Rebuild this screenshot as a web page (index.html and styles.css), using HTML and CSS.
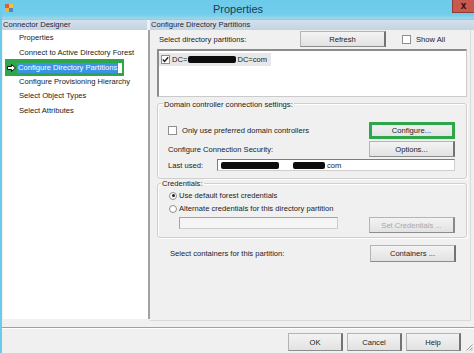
FILE: index.html
```html
<!DOCTYPE html>
<html>
  <head>
    <title>Properties</title>
    <link rel="stylesheet" href="styles.css">
  </head>
  <body>
    <div class="window">
      <div class="titlebar">
        <svg class="appicon" width="8" height="8" viewBox="0 0 8 8">
          <rect x="0" y="0" width="4" height="4" fill="#e25a3c"/>
          <rect x="4" y="0" width="4" height="4" fill="#f2c23e"/>
          <rect x="0" y="4" width="4" height="4" fill="#f0b43a"/>
          <rect x="4" y="4" width="4" height="4" fill="#4f86c6"/>
        </svg>
        <div class="title">Properties</div>
        <div class="close">x</div>
      </div>

      <div class="main">
        <div class="nav">
          <div class="pane-head">Connector Designer</div>
          <ul class="steps">
            <li>Properties</li>
            <li>Connect to Active Directory Forest</li>
            <li class="current">
              <svg class="arrow" width="9" height="8" viewBox="0 0 9 8">
                <path d="M0.5 2.5 H4.5 V0.5 L8.5 4 L4.5 7.5 V5.5 H0.5 Z" fill="#fff" stroke="#111" stroke-width="1"/>
              </svg>
              <span class="sel">Configure Directory Partitions</span>
              <span class="caret"></span>
            </li>
            <li>Configure Provisioning Hierarchy</li>
            <li>Select Object Types</li>
            <li>Select Attributes</li>
          </ul>
        </div>

        <div class="content">
          <div class="pane-head">Configure Directory Partitions</div>
          <div class="panel">
            <div class="partitions-bar">
              <span class="bar-label">Select directory partitions:</span>
              <button class="btn refresh">Refresh</button>
              <span class="check"></span>
              <span class="check-label">Show All</span>
            </div>

            <div class="listbox">
              <div class="partition">
                <span class="check checked">
                  <svg width="7" height="7" viewBox="0 0 7 7"><path d="M0.8 3.6 L2.6 5.4 L6.2 1.2" fill="none" stroke="#222" stroke-width="1.4"/></svg>
                </span>
                <span class="partition-name">DC=<span class="redact r1"></span>DC=com</span>
              </div>
            </div>

            <div class="group domain">
              <div class="group-title">Domain controller connection settings:</div>
              <div class="setting first">
                <span class="opt"><span class="check"></span><span class="check-label">Only use preferred domain controllers</span></span>
                <button class="btn marked">Configure...</button>
              </div>
              <div class="setting">
                <span>Configure Connection Security:</span>
                <button class="btn">Options...</button>
              </div>
              <div class="setting last-used">
                <span class="lu-label">Last used:</span>
                <span class="field lu-field"><span class="redact r2"></span><span class="redact r3"></span>com</span>
              </div>
            </div>

            <div class="group creds">
              <div class="group-title">Credentials:</div>
              <div class="radio-row"><span class="radio on"></span><span class="radio-label">Use default forest credentials</span></div>
              <div class="radio-row"><span class="radio"></span><span class="radio-label">Alternate credentials for this directory partition</span></div>
              <div class="setting cred-row">
                <span class="field off cred-field"></span>
                <button class="btn" disabled>Set Credentials ...</button>
              </div>
            </div>

            <div class="setting containers">
              <span>Select containers for this partition:</span>
              <button class="btn">Containers ...</button>
            </div>
          </div>
        </div>
      </div>

      <div class="footer">
        <div class="rule"></div>
        <div class="actions">
          <button class="btn wide">OK</button>
          <button class="btn wide">Cancel</button>
          <button class="btn wide">Help</button>
          <svg class="grip" width="8" height="8" viewBox="0 0 8 8">
            <path d="M7.5 1.5 L1.5 7.5 M7.5 4.5 L4.5 7.5 M7.5 6.5 L6.5 7.5" stroke="#9a9a9a" stroke-width="1"/>
          </svg>
        </div>
      </div>
    </div>
  </body>
</html>
```

FILE: styles.css
```css
body {
  margin: 0;
  width: 474px;
  height: 353px;
  overflow: hidden;
  background: #f0f0f0;
  font-family: "Liberation Sans", Arial, sans-serif;
  font-size: 7.6px;
  color: #222;
}
ul {
  list-style: none;
  margin: 0;
  padding: 0;
}
.window {
  height: 353px;
  display: flex;
  flex-direction: column;
  border-left: 2px solid #6ccbe8;
  box-sizing: border-box;
}

/* title bar */
.titlebar {
  height: 20px;
  flex: none;
  display: grid;
  grid-template-columns: 1fr auto 1fr;
  align-items: start;
  background: linear-gradient(#6dcbea, #70cdeb 75%, #9fd6ea);
  border-bottom: 1px solid #a9c4d8;
  box-sizing: border-box;
}
.appicon {
  margin: 4px 0 0 3px;
}
.title {
  font-size: 11px;
  line-height: 19px;
  color: #1d3a55;
}
.close {
  justify-self: end;
  width: 22px;
  height: 13px;
  background: #c8594f;
  border: 1px solid #8e3b35;
  border-top: 0;
  border-right: 0;
  box-sizing: border-box;
  color: #2a0d0a;
  font-weight: bold;
  font-size: 10px;
  line-height: 11px;
  text-align: center;
}

/* panes */
.main {
  flex: none;
  height: 301px;
  display: grid;
  grid-template-columns: 148px 1fr;
}
.nav, .content {
  display: flex;
  flex-direction: column;
}
.pane-head {
  height: 10px;
  line-height: 10px;
  padding-left: 1px;
  background: linear-gradient(#d3dfeb, #c4d3e3);
  color: #1a2838;
  white-space: nowrap;
}
.nav .pane-head {
  margin-right: 3px;
}
.steps {
  height: 289px;
  margin-left: 1px;
  padding-top: 1px;
  background: #fff;
  border-right: 2px solid #a2a2a2;
  box-sizing: border-box;
}
.steps li {
  height: 14.6px;
  line-height: 14.6px;
  padding-left: 16px;
  white-space: nowrap;
}
.steps li.current {
  margin: -1.2px 0 -1.2px 2px;
  width: 119px;
  height: 17px;
  padding-left: 2px;
  box-sizing: border-box;
  display: flex;
  align-items: center;
  background: #2ea64a;
}
.sel {
  margin-left: 1px;
  width: 100px;
  height: 10px;
  line-height: 10px;
  padding-left: 1px;
  box-sizing: border-box;
  background: #3b93e6;
  color: #fff;
  white-space: nowrap;
}
.caret {
  margin-left: 1px;
  width: 4px;
  height: 10px;
  background: #fff;
}

.panel {
  height: 291px;
  margin-right: 4px;
  padding: 1px 3px 0 7px;
  border-right: 1px solid #dadada;
  border-bottom: 1px solid #dadada;
  box-sizing: border-box;
}
.partitions-bar {
  display: flex;
  align-items: center;
  height: 16px;
}
.bar-label {
  width: 143px;
  padding-left: 2px;
  box-sizing: border-box;
}
.refresh {
  width: 78px;
  height: 16px;
  margin-right: 16px;
}

/* controls */
.btn {
  box-sizing: border-box;
  width: 86px;
  height: 16px;
  padding: 0;
  background: linear-gradient(#f3f3f3, #e2e2e2);
  border: 1px solid #b4b4b4;
  border-right: 2px solid #737373;
  border-bottom-color: #8c8c8c;
  font: inherit;
  color: #222;
  text-align: center;
}
.btn:disabled {
  color: #a9a9a9;
  border-right-color: #8a8a8a;
}
.btn.marked {
  height: 17px;
  outline: 3px solid #2ea64a;
  outline-offset: -3px;
}
.check {
  display: inline-flex;
  align-items: center;
  justify-content: center;
  width: 9px;
  height: 9px;
  background: #fff;
  border: 1px solid #8e8f8f;
  box-sizing: border-box;
}
.check-label {
  margin-left: 5px;
}
.radio {
  display: inline-flex;
  align-items: center;
  justify-content: center;
  width: 8px;
  height: 8px;
  border-radius: 50%;
  background: #fff;
  border: 1px solid #8e8f8f;
  box-sizing: border-box;
}
.radio.on::after {
  content: "";
  width: 3px;
  height: 3px;
  border-radius: 50%;
  background: #222;
}
.radio-label {
  margin-left: 2px;
}
.field {
  display: flex;
  align-items: center;
  height: 12px;
  background: #fff;
  border: 1px solid #cdcdcd;
  border-top-color: #7c7c7c;
  border-left-color: #7c7c7c;
  box-sizing: border-box;
}
.field.off {
  background: #f5f5f5;
  border-top-color: #a3a3a3;
  border-left-color: #a3a3a3;
}
.redact {
  display: inline-block;
  height: 7px;
  background: #0c0c0c;
  border-radius: 2px;
}

.listbox {
  margin-top: 2px;
  height: 48px;
  padding-top: 2px;
  background: #fff;
  border: 1px solid #cacaca;
  border-top: 2px solid #8c8c8c;
  border-left: 2px solid #8c8c8c;
  box-sizing: border-box;
}
.partition {
  display: flex;
  align-items: center;
  width: 112px;
  height: 13px;
  background: #e7e7e7;
}
.partition .check {
  margin-left: 2px;
}
.partition-name {
  display: flex;
  align-items: center;
  margin-left: 2px;
}
.r1 {
  width: 48px;
  margin: 0 1px;
}

/* group boxes */
.group {
  box-sizing: border-box;
  border: 1px solid #cfcfcf;
  border-radius: 3px;
  box-shadow: inset 1px 1px 0 #fff, 1px 1px 0 #fff;
  padding: 0 11px 0 10px;
}
.group-title {
  width: fit-content;
  height: 10px;
  line-height: 10px;
  margin: -4px 0 0 -5px;
  padding: 0 1px;
  background: #f0f0f0;
}
.domain {
  margin-top: 6px;
  height: 76px;
}
.setting {
  display: flex;
  align-items: center;
  justify-content: space-between;
  margin-top: 2px;
}
.setting.first {
  margin-top: 12px;
}
.opt {
  display: flex;
  align-items: center;
}
.last-used {
  justify-content: flex-start;
}
.lu-label {
  width: 49px;
}
.lu-field {
  width: 238px;
  padding-left: 3px;
}
.r2 {
  width: 58px;
}
.r3 {
  width: 32px;
  margin: 0 2px 0 14px;
}

.creds {
  margin-top: 4px;
  height: 55px;
  padding-left: 11px;
}
.creds .group-title {
  margin: -5px 0 0 -8px;
}
.radio-row {
  display: flex;
  align-items: center;
  height: 13px;
}
.radio-row:first-of-type {
  margin-top: 3px;
}
.cred-row {
  align-items: flex-start;
}
.cred-field {
  width: 159px;
  margin-left: 10px;
}

.containers {
  margin-top: 7px;
  height: 17px;
  padding: 0 11px 0 13px;
}
.containers .btn {
  height: 17px;
}

/* footer */
.footer {
  flex: 1;
  padding-top: 6px;
  box-sizing: border-box;
}
.rule {
  border-top: 1px solid #a0a0a0;
  border-bottom: 1px solid #fff;
}
.actions {
  display: flex;
  justify-content: flex-end;
  align-items: flex-start;
  gap: 4px;
  margin-top: 4px;
  padding-right: 1px;
}
.btn.wide {
  width: 55px;
  height: 18px;
}
.grip {
  margin-top: 10px;
}
```
